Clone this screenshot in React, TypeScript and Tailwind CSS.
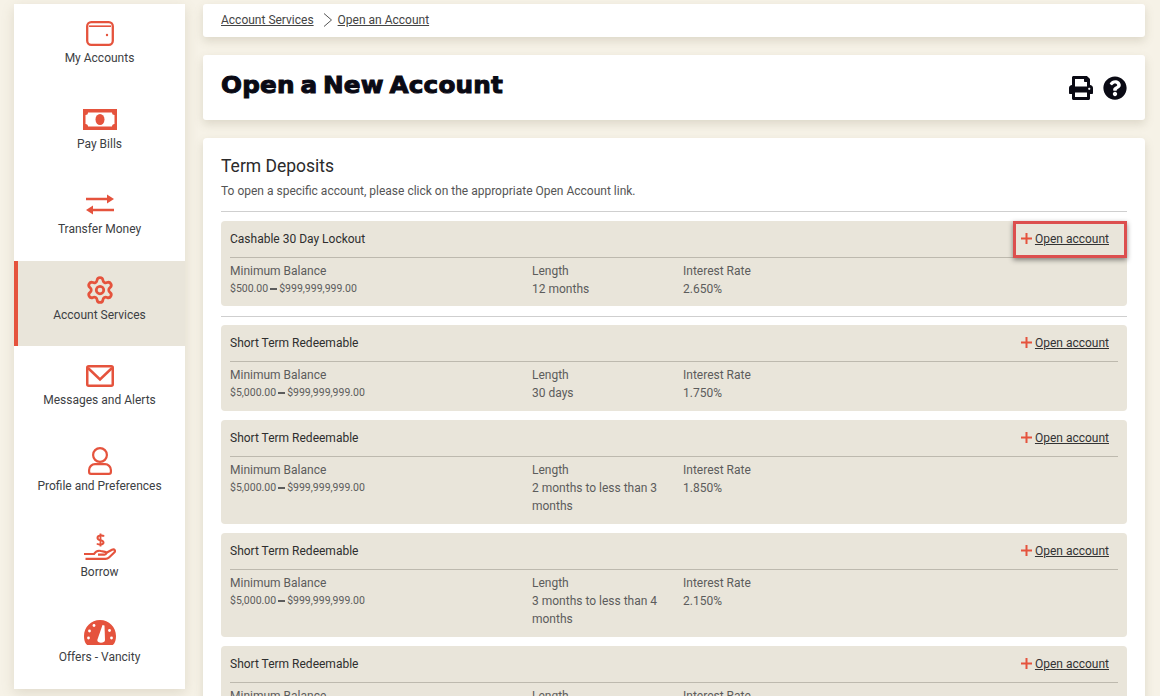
import React from "react";
import { Settings } from "lucide-react";
import { FaPrint, FaQuestionCircle } from "react-icons/fa";

const WalletIcon = () => (
  <svg width="28" height="25" viewBox="0 0 28 25" fill="none" stroke="#e5533d" strokeWidth="2.3">
    <rect x="1.2" y="1.2" width="25.6" height="22.6" rx="4" />
    <path d="M3 5.2 H25" strokeWidth="1.6" />
    <circle cx="21" cy="14" r="1.2" fill="#e5533d" stroke="none" />
  </svg>
);

const BillIcon = () => (
  <svg width="34" height="21" viewBox="0 0 34 21">
    <path
      fillRule="evenodd"
      fill="#e5533d"
      d="M0 0 H34 V21 H0 Z M5 3.5 A2.5 2.5 0 0 1 2.5 6 V15 A2.5 2.5 0 0 1 5 17.5 H29 A2.5 2.5 0 0 1 31.5 15 V6 A2.5 2.5 0 0 1 29 3.5 Z"
    />
    <ellipse cx="17" cy="10.5" rx="4.5" ry="5.5" fill="#e5533d" />
  </svg>
);

const TransferIcon = () => (
  <svg width="28" height="21" viewBox="0 0 28 21" fill="none" stroke="#e5533d" strokeWidth="2.5">
    <path d="M0 5 H24" />
    <path d="M28 5 L21 0.5 V9.5 Z" fill="#e5533d" stroke="none" />
    <path d="M4 16 H28" />
    <path d="M0 16 L7 11.5 V20.5 Z" fill="#e5533d" stroke="none" />
  </svg>
);

const MailIcon = () => (
  <svg width="28" height="22" viewBox="0 0 28 22" fill="none" stroke="#e5533d" strokeWidth="2.5">
    <rect x="1.25" y="1.25" width="25.5" height="19.5" rx="1.5" />
    <path d="M2 3 L14 14.5 L26 3" />
  </svg>
);

const UserIcon = () => (
  <svg width="24" height="28" viewBox="0 0 24 28" fill="none" stroke="#e5533d" strokeWidth="2.2">
    <circle cx="12" cy="8" r="6.9" />
    <path d="M7 17.2 H17 A5.9 5.9 0 0 1 22.9 23 V25 A1.9 1.9 0 0 1 21 26.9 H3 A1.9 1.9 0 0 1 1.1 25 V23 A5.9 5.9 0 0 1 7 17.2 Z" />
  </svg>
);

const BorrowIcon = () => (
  <svg width="32" height="28" viewBox="0 0 32 28" fill="none" stroke="#e5533d" strokeWidth="2.2">
    <path d="M20 3.5 C19 2 13.5 2 13.5 5 C13.5 8 19.5 6.5 19.5 9.5 C19.5 12 14 12 13 10.5" strokeWidth="2" />
    <path d="M16.5 0.5 V13.5" strokeWidth="1.8" />
    <path d="M0 21 H10 C12 17.5 15 17.5 17 18 L21 18.8 C23 19.3 22.5 21.6 20.5 21.6 H14" />
    <path d="M22 20 L28 16.8 C30.5 15.6 32 18 30 19.8 L25 24.5 C24 25.4 23 25.8 21.5 25.8 H1.5" />
  </svg>
);

const GaugeIcon = () => (
  <svg width="32" height="25" viewBox="0 0 32 25">
    <path
      fill="#e5533d"
      d="M16 0 C7 0 0 7 0 16 C0 19 0.6 21.5 1.8 23.5 C2.3 24.4 3 25 4 25 H28 C29 25 29.7 24.4 30.2 23.5 C31.4 21.5 32 19 32 16 C32 7 25 0 16 0 Z"
    />
    <path fill="#fff" d="M18.5 5 L20.5 5.5 L21 20 C21 23.5 13 23.5 13.3 20 Z" />
    <circle cx="10" cy="5.5" r="1.4" fill="#fff" />
    <circle cx="5.5" cy="11" r="1.4" fill="#fff" />
    <circle cx="4.5" cy="18" r="1.4" fill="#fff" />
    <circle cx="25.5" cy="10.5" r="1.4" fill="#fff" />
    <circle cx="27.5" cy="18" r="1.4" fill="#fff" />
  </svg>
);

const navItems = [
  { label: "My Accounts", icon: <WalletIcon /> },
  { label: "Pay Bills", icon: <BillIcon /> },
  { label: "Transfer Money", icon: <TransferIcon /> },
  { label: "Account Services", icon: <Settings size={30} color="#e5533d" strokeWidth={2.2} />, active: true },
  { label: "Messages and Alerts", icon: <MailIcon /> },
  { label: "Profile and Preferences", icon: <UserIcon /> },
  { label: "Borrow", icon: <BorrowIcon /> },
  { label: "Offers - Vancity", icon: <GaugeIcon /> },
];

const deposits = [
  { name: "Short Term Redeemable", min: "$5,000.00", length: "30 days", rate: "1.750%" },
  { name: "Short Term Redeemable", min: "$5,000.00", length: "2 months to less than 3 months", rate: "1.850%" },
  { name: "Short Term Redeemable", min: "$5,000.00", length: "3 months to less than 4 months", rate: "2.150%" },
  { name: "Short Term Redeemable", min: "$5,000.00", length: "4 months to less than 5 months", rate: "2.200%" },
];

type Deposit = { name: string; min: string; length: string; rate: string };

function DepositCard({ item, highlight }: { item: Deposit; highlight?: boolean }) {
  return (
    <div className={`rounded-[4px] bg-[#e9e5da] px-[9px] ${highlight ? "pb-[8px]" : "pb-[9px]"}`}>
      <div className="relative flex h-[37px] items-center justify-between border-b border-[#bdb9ae] pr-[9px] text-[#2e2e2e]">
        <span>{item.name}</span>
        <a className="flex items-center gap-[3px] text-[#333]">
          <svg className="mt-[-1px]" width="11" height="11" viewBox="0 0 11 11" fill="none" stroke="#e5533d" strokeWidth="2">
            <path d="M5.5 0 V11 M0 5.5 H11" />
          </svg>
          <span className="underline">Open account</span>
        </a>
        {highlight && (
          <div className="absolute right-[-9px] top-0 h-[37px] w-[114px] border-[3px] border-[#dc4f4f] shadow-[0_2px_5px_rgba(0,0,0,0.45)]" />
        )}
      </div>
      <div className="flex pt-[4px] text-[#5c5c5c]">
        <div className="w-[302px]">
          <div className="leading-[18px]">Minimum Balance</div>
          <div className="flex items-center gap-[2px] text-[10.5px] leading-[18px]">
            <span>{item.min}</span>
            <span className="h-[2px] w-[7px] bg-[#5c5c5c]" />
            <span>$999,999,999.00</span>
          </div>
        </div>
        <div className="w-[151px] pr-[16px]">
          <div className="leading-[18px]">Length</div>
          <div className="leading-[18px]">{item.length}</div>
        </div>
        <div>
          <div className="leading-[18px]">Interest Rate</div>
          <div className="leading-[18px]">{item.rate}</div>
        </div>
      </div>
    </div>
  );
}

export default function App() {
  return (
    <div className="flex h-[696px] gap-[18px] overflow-hidden bg-[#f6f2e7] pl-[14px] pr-[15px] pt-[4px] font-['Roboto',sans-serif] text-[12px]">
      <nav className="h-[685px] w-[171px] shrink-0 bg-white shadow-[0_4px_12px_rgba(120,110,80,0.18)]">
        {navItems.map((n) => (
          <div
            key={n.label}
            className={`flex h-[85.6px] flex-col items-center pt-[14px] text-[#3c4043] ${
              n.active ? "border-l-[4px] border-[#e5533d] bg-[#e9e5da] pr-[4px]" : ""
            }`}
          >
            <div className="flex h-[31px] items-center justify-center">{n.icon}</div>
            <div className="leading-[18px]">{n.label}</div>
          </div>
        ))}
      </nav>
      <main className="flex min-w-0 flex-1 flex-col gap-[18px]">
        <div className="flex h-[33px] shrink-0 items-center rounded-[3px] bg-white pb-[2px] pl-[18px] text-[#444] shadow-[0_4px_10px_rgba(120,110,80,0.2)]">
          <a className="underline">Account Services</a>
          <svg className="ml-[8px] mr-[4px]" width="12" height="16" viewBox="0 0 12 16" fill="none" stroke="#555" strokeWidth="1">
            <path d="M2 1.5 L9.5 8 L2 14.5" />
          </svg>
          <a className="underline">Open an Account</a>
        </div>
        <div className="flex h-[65px] shrink-0 items-center justify-between rounded-[3px] bg-white px-[18px] shadow-[0_4px_10px_rgba(120,110,80,0.2)]">
          <h1 className="mb-[3px] origin-left scale-x-[1.05] whitespace-nowrap font-['DejaVu_Sans',sans-serif] text-[23.5px] font-bold tracking-[0.2px] text-[#0a0a14] [-webkit-text-stroke:1px_#0a0a14] [word-spacing:-3px]">
            Open a New Account
          </h1>
          <div className="flex items-center gap-[10px] text-[#0a0a14]">
            <FaPrint size={24} />
            <FaQuestionCircle size={24} />
          </div>
        </div>
        <section className="flex-1 rounded-t-[4px] bg-white px-[18px] pt-[17px] shadow-[0_4px_10px_rgba(120,110,80,0.2)]">
          <h2 className="text-[17.5px] leading-[22px] text-[#2b2b2b]">Term Deposits</h2>
          <p className="mt-[5px] leading-[18px] text-[#555]">To open a specific account, please click on the appropriate Open Account link.</p>
          <div className="mt-[11px] border-t border-[#cfcfcf] pt-[9px]">
            <DepositCard
              highlight
              item={{ name: "Cashable 30 Day Lockout", min: "$500.00", length: "12 months", rate: "2.650%" }}
            />
          </div>
          <div className="mt-[10px] flex flex-col gap-[9px] border-t border-[#cfcfcf] pt-[8px]">
            {deposits.map((d, i) => (
              <DepositCard key={i} item={d} />
            ))}
          </div>
        </section>
      </main>
    </div>
  );
}
